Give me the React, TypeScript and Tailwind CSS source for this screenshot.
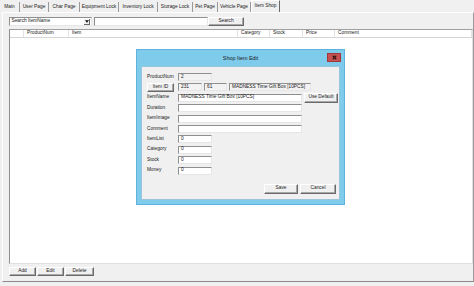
import React from 'react';

const TABS: [string, string][] = [
  ['Main', 'w-[20px]'],
  ['User Page', 'w-[29px]'],
  ['Char Page', 'w-[31px]'],
  ['Equipment Lock', 'w-[39px]'],
  ['Inventory Lock', 'w-[39px]'],
  ['Storage Lock', 'w-[35px]'],
  ['Pet Page', 'w-[25px]'],
  ['Vehicle Page', 'w-[33px]'],
];

const COLUMNS: [string, string][] = [
  ['', 'w-[14px]'],
  ['ProductNum', 'w-[45px]'],
  ['Item', 'w-[169px]'],
  ['Category', 'w-[32px]'],
  ['Stock', 'w-[33px]'],
  ['Price', 'w-[32px]'],
  ['Comment', 'flex-1'],
];

const BOX = 'h-[8px] flex items-center pl-[2px] leading-none border border-t-[#8f8f8f] border-l-[#8f8f8f] border-r-[#e6e6e6] border-b-[#e6e6e6]';
const BTN = 'flex items-center justify-center leading-none bg-[#f0f0f0] border border-t-white border-l-white border-r-[#6a6a6a] border-b-[#6a6a6a] shadow-[inset_-1px_-1px_0_#a8a8a8]';

function Box({ w, value = '', gray = false }: { w: string; value?: string; gray?: boolean }) {
  return <div className={`${BOX} ${w} ${gray ? 'bg-[#f2f2f2]' : 'bg-white'}`}>{value}</div>;
}

function Row({ label, children }: { label: string; children?: React.ReactNode }) {
  return (
    <div className="flex items-center h-[8px]">
      <div className="w-[31px] leading-none">{label}</div>
      {children}
    </div>
  );
}

function ShopItemEdit() {
  return (
    <div className="absolute left-[136px] top-[49px] w-[209px] h-[156px] bg-[#7fcbec] border border-[#5eb2dc] flex flex-col">
      {/* title bar */}
      <div className="relative h-[16px] flex items-center justify-center text-[5.4px] text-[#1a1a1a]">
        Shop Item Edit
        <div className="absolute right-[3px] top-[3px] w-[14px] h-[9px] bg-[#c75050] border border-[#9e3a3a] flex items-center justify-center">
          <svg width="5" height="5" viewBox="0 0 10 10">
            <path d="M1.5 1.5 L8.5 8.5 M8.5 1.5 L1.5 8.5" stroke="#2a1414" strokeWidth="2.2" />
          </svg>
        </div>
      </div>

      {/* client area */}
      <div className="mx-[4px] mb-[4px] flex-1 bg-[#f0f0f0] border border-[#9ac6dd] pl-[5px] pt-[6px] flex flex-col">
        <div className="flex flex-col gap-[2.4px]">
          <Row label="ProductNum">
            <Box w="w-[34px]" value="2" gray />
          </Row>
          <div className="flex items-center h-[8px]">
            <div className={`${BTN} w-[27px] h-[9.5px] mr-[4px]`}>Item ID</div>
            <div className="flex gap-[2px]">
              <Box w="w-[24px]" value="231" gray />
              <Box w="w-[23px]" value="61" gray />
              <Box w="w-[82px]" value="MADNESS Time Gift Box [10PCS]" gray />
            </div>
          </div>
          <Row label="ItemName">
            <Box w="w-[124px]" value="MADNESS Time Gift Box [10PCS]" />
            <div className={`${BTN} ml-[2px] w-[34px] h-[9.5px]`}>Use Default</div>
          </Row>
          <Row label="Duration">
            <Box w="w-[124px]" />
          </Row>
          <Row label="ItemImage">
            <Box w="w-[124px]" />
          </Row>
          <Row label="Comment">
            <Box w="w-[124px]" />
          </Row>
          <Row label="ItemList">
            <Box w="w-[34px]" value="0" />
          </Row>
          <Row label="Category">
            <Box w="w-[34px]" value="0" />
          </Row>
          <Row label="Stock">
            <Box w="w-[34px]" value="0" />
          </Row>
          <Row label="Money">
            <Box w="w-[34px]" value="0" />
          </Row>
        </div>
        <div className="flex justify-end gap-[2px] pr-[3px] mt-[9px]">
          <div className={`${BTN} w-[34px] h-[10px]`}>Save</div>
          <div className={`${BTN} w-[36px] h-[10px]`}>Cancel</div>
        </div>
      </div>
    </div>
  );
}

export default function App() {
  return (
    <div className="relative w-[474px] h-[286px] overflow-hidden bg-[#f0f0f0] text-[4.8px] text-[#1a1a1a] font-['Liberation_Sans',Arial,sans-serif]">
      {/* tab strip */}
      <div className="flex h-[12px] items-end">
        {TABS.map(([name, w]) => (
          <div key={name} className={`${w} h-[10px] flex items-center justify-center leading-none border-r border-[#9a9a9a]`}>
            {name}
          </div>
        ))}
        <div className="w-[29px] h-[12px] flex items-center justify-center leading-none bg-[#f0f0f0] border-t border-l border-white border-r border-r-[#6a6a6a]">
          Item Shop
        </div>
      </div>

      {/* tab page */}
      <div className="ml-[2px] w-[472px] h-[270px] border border-t-white border-l-white border-r-[#9a9a9a] border-b-[#8a8a8a] pl-[6px] pt-[4px] flex flex-col">
        {/* search row */}
        <div className="flex items-center h-[9px]">
          <div className="w-[83px] h-[8.5px] bg-white border border-t-[#8f8f8f] border-l-[#8f8f8f] border-r-[#e6e6e6] border-b-[#e6e6e6] flex items-center justify-between pl-[1.5px] pr-[1px] leading-none">
            <span>Search ItemName</span>
            <div className="w-[6px] h-[6px] bg-[#f0f0f0] border-r border-b border-[#6a6a6a] flex items-center justify-center">
              <svg width="4" height="3" viewBox="0 0 8 5">
                <path d="M0 0 L8 0 L4 5 Z" fill="#111" />
              </svg>
            </div>
          </div>
          <div className="ml-[2px] w-[114px] h-[8.5px] bg-white border border-t-[#8f8f8f] border-l-[#8f8f8f] border-r-[#e6e6e6] border-b-[#e6e6e6]" />
          <div className={`${BTN} w-[36px] h-[9px]`}>Search</div>
        </div>

        {/* list view */}
        <div className="mt-[2.5px] w-[464px] h-[235px] bg-white border border-l-[#8f8f8f] border-t-[#a0a0a0] border-r-[#e0e0e0] border-b-[#e0e0e0] flex flex-col">
          <div className="flex h-[8px] border-b border-[#d5d5d5]">
            {COLUMNS.map(([name, w], i) => (
              <div key={i} className={`${w} h-full flex items-center pl-[3px] leading-none border-r border-[#e3e3e3]`}>
                {name}
              </div>
            ))}
          </div>
        </div>

        {/* bottom buttons */}
        <div className="flex gap-[1px] mt-[3.5px]">
          <div className={`${BTN} w-[27px] h-[8.5px]`}>Add</div>
          <div className={`${BTN} w-[27px] h-[8.5px]`}>Edit</div>
          <div className={`${BTN} w-[29px] h-[8.5px]`}>Delete</div>
        </div>
      </div>

      <ShopItemEdit />
    </div>
  );
}
